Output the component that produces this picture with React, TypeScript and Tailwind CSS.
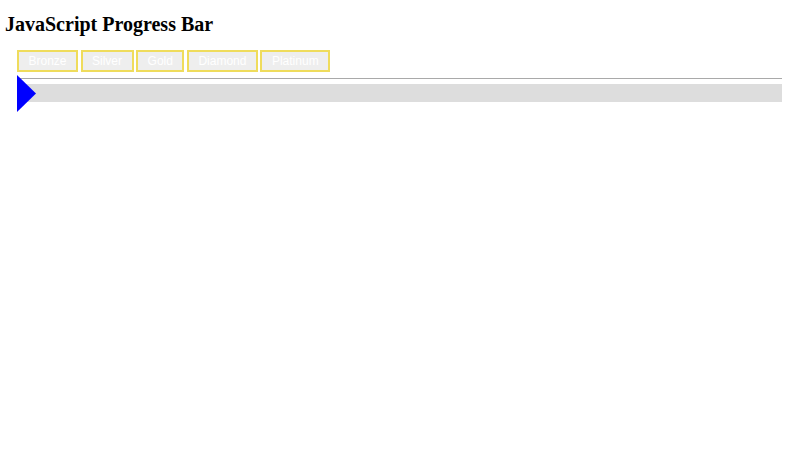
const levels = ['Bronze', 'Silver', 'Gold', 'Diamond', 'Platinum'];

export default function App() {
  return (
    <div className="min-h-screen bg-white px-[5px] text-black">
      <h1 className="pt-[13px] text-[20px] leading-[23px] font-bold font-['Liberation_Serif',serif]">
        JavaScript Progress Bar
      </h1>

      <div className="ml-[12px] mr-[13px] mt-[14px]">
        {/* level buttons */}
        <div className="flex gap-[2.5px]">
          {levels.map((level) => (
            <button
              key={level}
              type="button"
              className="border-2 border-[#efdc5c] bg-[#eeeeee] px-[9.5px] text-[12px] leading-[18px] text-white font-['Liberation_Sans',Arial,sans-serif]"
            >
              {level}
            </button>
          ))}
        </div>

        <div className="mt-[6px] h-px bg-[#a9a9a9]" />

        {/* progress track with marker */}
        <div className="relative mt-[5px] h-[18px] bg-[#dddddd]">
          <svg
            className="absolute left-0 top-[-9px]"
            width="19"
            height="37"
            viewBox="0 0 19 37"
          >
            <polygon points="0,0 19,18.5 0,37" fill="#0000ff" />
          </svg>
        </div>
      </div>
    </div>
  );
}
